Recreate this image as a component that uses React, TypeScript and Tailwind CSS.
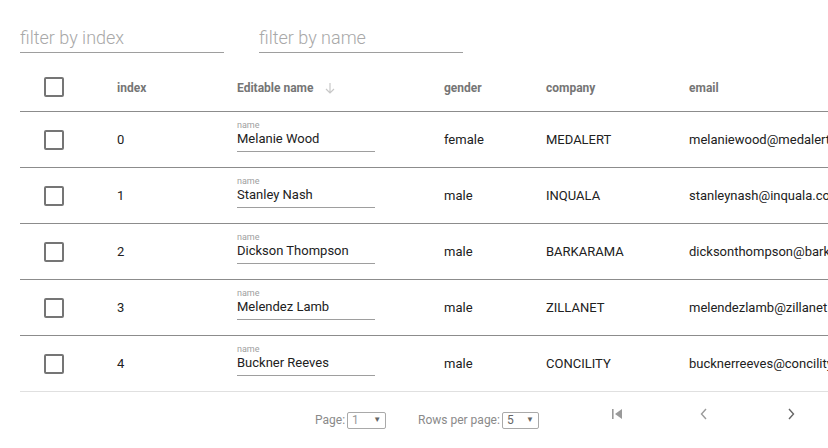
import React from 'react';

const rows = [
  { index: 0, name: 'Melanie Wood', gender: 'female', company: 'MEDALERT', email: 'melaniewood@medalert.com' },
  { index: 1, name: 'Stanley Nash', gender: 'male', company: 'INQUALA', email: 'stanleynash@inquala.com' },
  { index: 2, name: 'Dickson Thompson', gender: 'male', company: 'BARKARAMA', email: 'dicksonthompson@barkarama.com' },
  { index: 3, name: 'Melendez Lamb', gender: 'male', company: 'ZILLANET', email: 'melendezlamb@zillanet.com' },
  { index: 4, name: 'Buckner Reeves', gender: 'male', company: 'CONCILITY', email: 'bucknerreeves@concility.com' },
];

const cols = 'grid grid-cols-[97px_120px_207px_102px_143px_300px]';

const Checkbox: React.FC = () => (
  <div className="w-[20px] h-[20px] border-2 border-[#757575] rounded-[2px] ml-[24px]" />
);

const App: React.FC = () => {
  return (
    <div className="w-[828px] h-[448px] overflow-hidden bg-white font-['Roboto',sans-serif]">
      <div className="flex gap-[35px] pl-[20px] pt-[25px]">
        <div className="w-[204px] h-[28px] border-b border-[#9e9e9e] text-[18px] leading-[26px] text-[#a8a8a8] font-light whitespace-nowrap">filter by index</div>
        <div className="w-[204px] h-[28px] border-b border-[#9e9e9e] text-[18px] leading-[26px] text-[#a8a8a8] font-light whitespace-nowrap">filter by name</div>
      </div>

      <div className="ml-[20px] w-[969px] mt-[9px]">
        <div className={`${cols} h-[50px] items-center border-b border-[#8c8c8c] text-[12px] font-bold text-[#757575]`}>
          <div className="pt-[1px]"><Checkbox /></div>
          <div className="pt-[2px]">index</div>
          <div className="pt-[2px] flex items-center">
            Editable name
            <svg className="ml-[12px]" width="10" height="12" viewBox="0 0 10 12" fill="none" stroke="#c8c8c8" strokeWidth="1.2">
              <path d="M5 1v10M1 7l4 4 4-4" />
            </svg>
          </div>
          <div className="pt-[2px]">gender</div>
          <div className="pt-[2px]">company</div>
          <div className="pt-[2px]">email</div>
        </div>

        {rows.map((r, i) => (
          <div
            key={r.index}
            className={`${cols} h-[56px] items-center border-b text-[13px] text-[#212121] ${i === rows.length - 1 ? 'border-[#e0e0e0]' : 'border-[#8c8c8c]'}`}
          >
            <div><Checkbox /></div>
            <div className="pt-[1px]">{r.index}</div>
            <div className="pb-[7px]">
              <div className="w-[138px] border-b border-[#9e9e9e] pb-[3px]">
                <div className="text-[9px] leading-[10px] text-[#a0a0a0]">name</div>
                <div className="text-[13px] leading-[18px] text-[#212121] whitespace-nowrap">{r.name}</div>
              </div>
            </div>
            <div className="pt-[1px]">{r.gender}</div>
            <div className="pt-[1px]">{r.company}</div>
            <div className="pt-[1px] whitespace-nowrap overflow-hidden">{r.email}</div>
          </div>
        ))}

        <div className="flex items-center h-[56px] text-[12px] text-[#8a8a8a]">
          <div className="flex items-center ml-[295px]">
            <span>Page:</span>
            <div className="ml-[2px] w-[39px] h-[17px] border border-[#a9a9a9] rounded-[2px] flex items-center justify-between px-[4px] text-[#9a9a9a]">
              <span>1</span>
              <span className="text-[8px] text-[#666]">▼</span>
            </div>
          </div>
          <div className="flex items-center ml-[32px]">
            <span>Rows per page:</span>
            <div className="ml-[2px] w-[37px] h-[17px] border border-[#a9a9a9] rounded-[2px] flex items-center justify-between px-[4px] text-[#666]">
              <span>5</span>
              <span className="text-[8px] text-[#666]">▼</span>
            </div>
          </div>
          <div className="ml-[72px] -mt-[12px]">
            <svg width="12" height="12" viewBox="0 0 12 12">
              <rect x="1" y="1" width="1.6" height="10" fill="#9a9a9a" />
              <path d="M11 1v10L4 6z" fill="#9a9a9a" />
            </svg>
          </div>
          <div className="ml-[76px] -mt-[12px]">
            <svg width="10" height="12" viewBox="0 0 10 12" fill="none" stroke="#9a9a9a" strokeWidth="1.4">
              <path d="M7 1L2.5 6 7 11" />
            </svg>
          </div>
          <div className="ml-[77px] -mt-[12px]">
            <svg width="10" height="12" viewBox="0 0 10 12" fill="none" stroke="#666" strokeWidth="1.4">
              <path d="M3 1l4.5 5L3 11" />
            </svg>
          </div>
        </div>
      </div>
    </div>
  );
};

export default App;
